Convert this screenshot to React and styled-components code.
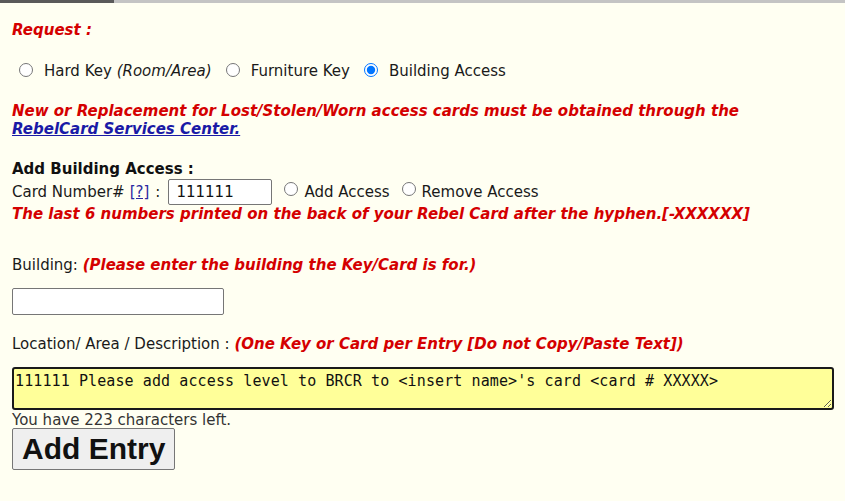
import React from "react";
import styled, { createGlobalStyle } from "styled-components";

const GlobalStyle = createGlobalStyle`
  html, body {
    margin: 0;
    padding: 0;
    background: #fffff2;
  }
  body {
    font-family: "DejaVu Sans", Verdana, sans-serif;
    font-size: 15px;
    color: #1a1a1a;
  }
`;

const TopStrip = styled.div`
  height: 3px;
  background: linear-gradient(to right, #5a5a5a 0, #5a5a5a 114px, #c4c4c4 114px);
`;

const Page = styled.form`
  padding: 18px 12px 30px 12px;
`;

const Heading = styled.div`
  font-weight: bold;
  color: ${(p) => (p.$red ? "#d40000" : "#111")};
  font-style: ${(p) => (p.$red ? "italic" : "normal")};
  line-height: 18px;
  margin-bottom: ${(p) => p.$gap || 0}px;
`;

const RadioRow = styled.div`
  display: flex;
  align-items: center;
  line-height: 18px;
  margin: 0 0 22px 7px;
`;

const Radio = styled.input.attrs({ type: "radio" })`
  width: 14px;
  height: 14px;
  margin: 0 11px 3px 0;
  accent-color: #0075ff;
`;

const Choice = styled.label`
  display: inline-flex;
  align-items: center;
  margin-right: 14px;
`;

const Note = styled.div`
  color: #d40000;
  font-weight: bold;
  font-style: italic;
  line-height: 18px;
`;

const Link = styled.a`
  color: #1a1aa6;
  font-weight: bold;
  font-style: italic;
  text-decoration: underline;
`;

const Block = styled.div`
  margin-top: ${(p) => p.$top || 0}px;
`;

const FieldRow = styled.div`
  display: flex;
  align-items: center;
  height: 27px;
  line-height: 18px;
`;

const Help = styled.a`
  color: #2a2aa0;
  text-decoration: underline;
  margin: 0 6px 0 5px;
`;

const TextInput = styled.input`
  box-sizing: border-box;
  width: ${(p) => p.$w}px;
  height: ${(p) => p.$h || 26}px;
  border: 1px solid #767676;
  border-radius: 2px;
  background: #fff;
  font-family: "DejaVu Sans", Verdana, sans-serif;
  font-size: 15px;
  padding: 1px 7px;
  color: #111;
  margin: ${(p) => p.$m || 0};
`;

const SmallRadio = styled.input.attrs({ type: "radio" })`
  width: 14px;
  height: 14px;
  margin: 0 6px 5px 12px;
  accent-color: #0075ff;
`;

const Label = styled.div`
  line-height: 18px;
`;

const Hint = styled.span`
  color: #d40000;
  font-weight: bold;
  font-style: italic;
`;

const Description = styled.textarea`
  display: block;
  box-sizing: border-box;
  width: 822px;
  height: 43px;
  margin-top: 14px;
  background: #ffff99;
  border: 2px solid #1a1a1a;
  border-radius: 3px;
  padding: 3px 1px 2px 1px;
  font-family: "DejaVu Sans Mono", "Liberation Mono", monospace;
  font-size: 15px;
  letter-spacing: 0.1px;
  line-height: 18px;
  color: #111;
  resize: both;
`;

const Counter = styled.div`
  color: #333;
  line-height: 16px;
  margin-top: 2px;
`;

const SubmitButton = styled.button`
  box-sizing: border-box;
  height: 42px;
  padding: 0 9px;
  background: #efefef;
  border: 1px solid #767676;
  border-radius: 2px;
  font-family: "Liberation Sans", Arial, sans-serif;
  font-weight: bold;
  font-size: 30px;
  color: #111;
`;

export default function App() {
  return (
    <>
      <GlobalStyle />
      <TopStrip />
      <Page onSubmit={(e) => e.preventDefault()}>
        <Heading $red $gap={23}>Request :</Heading>
        <RadioRow>
          <Choice>
            <Radio name="req" />
            Hard Key&nbsp;<i>(Room/Area)</i>
          </Choice>
          <Choice>
            <Radio name="req" />
            Furniture Key
          </Choice>
          <Choice>
            <Radio name="req" defaultChecked />
            Building Access
          </Choice>
        </RadioRow>
        <Note>
          New or Replacement for Lost/Stolen/Worn access cards must be obtained through the
          <br />
          <Link href="#">RebelCard Services Center.</Link>
        </Note>
        <Block $top={22}>
          <Heading>Add Building Access :</Heading>
          <FieldRow>
            Card Number#<Help href="#">[?]</Help>:
            <TextInput $w={104} defaultValue="111111" $m="0 0 0 8px" />
            <SmallRadio name="act" />
            Add Access
            <SmallRadio name="act" />
            Remove Access
          </FieldRow>
          <Note>The last 6 numbers printed on the back of your Rebel Card after the hyphen.[-XXXXXX]</Note>
        </Block>
        <Block $top={33}>
          <Label>
            Building: <Hint>(Please enter the building the Key/Card is for.)</Hint>
          </Label>
          <TextInput $w={212} $h={27} $m="14px 0 0 0" />
        </Block>
        <Block $top={20}>
          <Label>
            Location/ Area / Description : <Hint>(One Key or Card per Entry [Do not Copy/Paste Text])</Hint>
          </Label>
          <Description defaultValue="111111 Please add access level to BRCR to <insert name>'s card <card # XXXXX>" />
          <Counter>You have 223 characters left.</Counter>
          <SubmitButton type="submit">Add Entry</SubmitButton>
        </Block>
      </Page>
    </>
  );
}
